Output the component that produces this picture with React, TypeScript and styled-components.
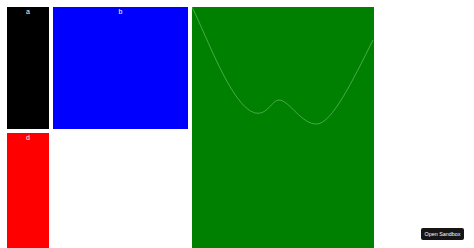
import React from 'react';
import styled, { createGlobalStyle } from 'styled-components';

const GlobalStyle = createGlobalStyle`
  html, body {
    margin: 0;
    padding: 0;
    background: #ffffff;
    overflow: hidden;
    font-family: "Liberation Sans", Arial, sans-serif;
  }
`;

const Layout = styled.div`
  display: grid;
  grid-template-columns: 42px 135px 182px;
  grid-template-rows: 122px 1fr;
  grid-template-areas:
    "a b c"
    "d . c";
  gap: 4px;
  padding: 7px 7px 0;
  height: 248px;
  box-sizing: border-box;
`;

const Cell = styled.div<{ $area: string; $bg: string }>`
  grid-area: ${p => p.$area};
  background: ${p => p.$bg};
  color: #ffffff;
  font-size: 7px;
  line-height: 8px;
  text-align: center;
  padding-top: 1px;
  position: relative;
  overflow: hidden;
  min-height: 0;
`;

const Curve = styled.svg`
  display: block;
  position: absolute;
  top: 0;
  left: 0;
  width: 182px;
  height: 130px;
`;

const SandboxButton = styled.button`
  position: fixed;
  right: 10px;
  bottom: 8px;
  width: 43px;
  height: 12px;
  padding: 0;
  border: none;
  border-radius: 2px;
  background: #151515;
  color: #ffffff;
  font-family: "Liberation Sans", Arial, sans-serif;
  font-size: 5.4px;
  line-height: 12px;
  text-align: center;
  cursor: pointer;
`;

export default function App() {
  return (
    <>
      <GlobalStyle />
      <Layout>
        <Cell $area="a" $bg="#000000">a</Cell>
        <Cell $area="b" $bg="#0000ff">b</Cell>
        <Cell $area="c" $bg="#008000">
          <Curve viewBox="0 0 182 130">
            <path
              d="M0,0 C15,30 40,100 63,106 C75,109 80,93 87,93 C97,93 110,118 125,117 C140,116 160,75 181,33"
              fill="none"
              stroke="#6cb86c"
              strokeWidth="0.7"
            />
          </Curve>
        </Cell>
        <Cell $area="d" $bg="#ff0000">d</Cell>
      </Layout>
      <SandboxButton>Open Sandbox</SandboxButton>
    </>
  );
}
